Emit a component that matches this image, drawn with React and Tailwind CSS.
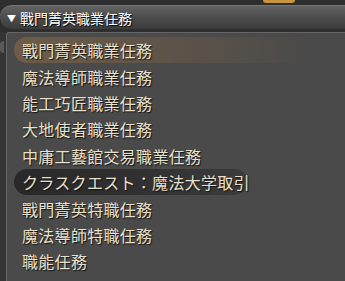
import React from 'react';

const items = [
  '戰門菁英職業任務',
  '魔法導師職業任務',
  '能工巧匠職業任務',
  '大地使者職業任務',
  '中庸工藝館交易職業任務',
  'クラスクエスト：魔法大学取引',
  '戰門菁英特職任務',
  '魔法導師特職任務',
  '職能任務',
];

const font = { fontFamily: '"Noto Sans CJK TC", "Noto Sans CJK JP", sans-serif' };

export default function App() {
  return (
    <div className="w-[345px] h-[281px] overflow-hidden bg-[#2e2e2e] flex flex-col" style={font}>
      {/* top strip */}
      <div className="h-[5px] flex shrink-0">
        <div className="ml-[263px] w-[32px] h-[3px] bg-[#c8953e] rounded-b-sm" />
      </div>
      {/* header */}
      <div className="h-[24px] shrink-0 rounded-l-[12px] bg-gradient-to-b from-[#636363] via-[#4c4c4c] to-[#3c3c3c] border-t border-[#767676] flex items-center pl-[7px]">
        <span className="text-white text-[9px] leading-none mr-[4px] mt-[1px]">▼</span>
        <span className="text-white text-[14px] leading-none [text-shadow:1px_1px_1px_#000]">戰門菁英職業任務</span>
      </div>
      <div className="flex flex-1 mt-[3px]">
        <div className="w-[6px] shrink-0 bg-[#353535] flex flex-col">
          <div className="mt-[9px] h-[12px] w-[4px] rounded-l-full bg-[#5a5a5a]" />
        </div>
        <div className="flex-1 bg-[#4a4a4a] border-t border-l border-[#666666] rounded-tl-[3px] pt-[4px] pl-[7px]">
          {items.map((t, i) => (
            <div
              key={t}
              className={
                'h-[26.4px] flex items-center pl-[8px] rounded-full whitespace-nowrap ' +
                (i === 0
                  ? 'w-[300px] bg-gradient-to-r from-[#6e5c48] via-[#5e5448] to-[#4a4a4a]'
                  : i === 5
                  ? 'w-[234px] bg-gradient-to-r from-[#282828] via-[#303030] to-[#3c3c3c]'
                  : '')
              }
            >
              <span className="text-[#e8e1cd] text-[16px] leading-none tracking-[0.3px] [text-shadow:1px_1px_1px_#111]">{t}</span>
            </div>
          ))}
        </div>
      </div>
    </div>
  );
}
